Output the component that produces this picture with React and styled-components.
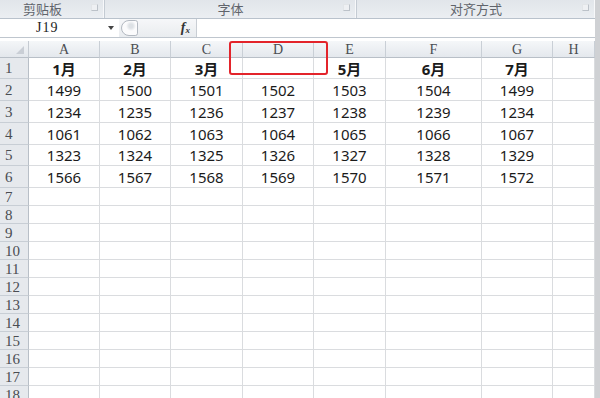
import styled, { createGlobalStyle } from "styled-components";

const GlobalStyle = createGlobalStyle`
  html, body {
    margin: 0;
    padding: 0;
    background: #ffffff;
    overflow: hidden;
  }
`;

const columns = [
  { letter: "A", width: 71 },
  { letter: "B", width: 71 },
  { letter: "C", width: 72 },
  { letter: "D", width: 71 },
  { letter: "E", width: 72 },
  { letter: "F", width: 96 },
  { letter: "G", width: 71 },
  { letter: "H", width: 42 },
];

const months = ["1月", "2月", "3月", "", "5月", "6月", "7月", ""];

const values = [
  [1499, 1500, 1501, 1502, 1503, 1504, 1499],
  [1234, 1235, 1236, 1237, 1238, 1239, 1234],
  [1061, 1062, 1063, 1064, 1065, 1066, 1067],
  [1323, 1324, 1325, 1326, 1327, 1328, 1329],
  [1566, 1567, 1568, 1569, 1570, 1571, 1572],
];

const dataHeights = [21, 22, 22, 22, 21, 22];

const groups = [
  { label: "剪贴板", width: 105, align: "left" },
  { label: "字体", width: 252, align: "center" },
  { label: "对齐方式", width: 239, align: "center" },
];

const App = () => {
  const template = `29px ${columns.map((c) => c.width + "px").join(" ")}`;
  const emptyRows = Array.from({ length: 12 }, (_, i) => i + 7);

  return (
    <>
      <GlobalStyle />
      <Window>
        <Ribbon>
          {groups.map((g) => (
            <Group key={g.label} $width={g.width}>
              <GroupLabel $align={g.align}>{g.label}</GroupLabel>
              <Launcher />
            </Group>
          ))}
        </Ribbon>

        <FormulaBar>
          <NameBox>
            <span>J19</span>
            <Arrow />
          </NameBox>
          <Splitter>
            <Grip />
            <Fx>
              f<sub>x</sub>
            </Fx>
          </Splitter>
          <FormulaInput />
        </FormulaBar>

        <Sheet style={{ gridTemplateColumns: template }}>
          <Corner>
            <CornerMark />
          </Corner>
          {columns.map((c) => (
            <ColHeader key={c.letter}>{c.letter}</ColHeader>
          ))}

          <RowHeader $h={dataHeights[0]}>1</RowHeader>
          {months.map((m, i) => (
            <Cell key={"m" + i} $h={dataHeights[0]} $bold>
              {m}
            </Cell>
          ))}

          {values.map((row, r) => (
            <Row key={r}>
              <RowHeader $h={dataHeights[r + 1]}>{r + 2}</RowHeader>
              {row.map((v, i) => (
                <Cell key={i} $h={dataHeights[r + 1]}>
                  {v}
                </Cell>
              ))}
              <Cell $h={dataHeights[r + 1]} />
            </Row>
          ))}

          {emptyRows.map((n) => (
            <Row key={n}>
              <RowHeader $h={18}>{n}</RowHeader>
              {columns.map((c) => (
                <Cell key={c.letter} $h={18} />
              ))}
            </Row>
          ))}

          <Highlight />
        </Sheet>
        <ScrollEdge />
      </Window>
    </>
  );
};

export default App;

// Styled Components
const Window = styled.div`
  position: relative;
  width: 600px;
  height: 398px;
  overflow: hidden;
  background: #ffffff;
  font-family: "Noto Sans", "Noto Sans CJK SC", sans-serif;
`;

const Ribbon = styled.div`
  display: flex;
  height: 18px;
  background: linear-gradient(#e1e5ea, #ebeef2);
  border-bottom: 1px solid #b9c2cc;
  width: 596px;
`;

const Group = styled.div`
  position: relative;
  width: ${(p) => p.$width}px;
  display: flex;
  align-items: center;
  border-right: 1px solid #c4cbd3;
  box-shadow: inset -1px 0 0 #f7f8fa;
  box-sizing: border-box;
`;

const GroupLabel = styled.div`
  flex: 1;
  text-align: ${(p) => p.$align};
  padding-left: ${(p) => (p.$align === "left" ? "23px" : "0")};
  font-family: "Noto Sans CJK SC", sans-serif;
  font-size: 13px;
  line-height: 16px;
  color: #60646b;
  margin-top: -1px;
`;

const Launcher = styled.div`
  position: absolute;
  right: 6px;
  top: 4px;
  width: 5px;
  height: 5px;
  border: 1px solid #bcc2c9;
  border-top-color: #e2e5e8;
  border-left-color: #e2e5e8;
  background: #eef0f3;
`;

const FormulaBar = styled.div`
  display: flex;
  height: 18px;
  width: 596px;
  border-bottom: 1px solid #bfc6ce;
  background: #ffffff;
  margin-bottom: 3px;
`;

const NameBox = styled.div`
  width: 119px;
  display: flex;
  align-items: center;
  box-sizing: border-box;
  padding-left: 36px;
  font-family: "Liberation Serif", serif;
  font-size: 14px;
  letter-spacing: 1px;
  color: #222;

  span {
    flex: 1;
  }
`;

const Arrow = styled.div`
  width: 0;
  height: 0;
  border-left: 3px solid transparent;
  border-right: 3px solid transparent;
  border-top: 4px solid #444;
  margin-right: 5px;
`;

const Splitter = styled.div`
  width: 78px;
  display: flex;
  align-items: center;
  justify-content: space-between;
  background: linear-gradient(#f6f7f9, #e9ecef);
  border-right: 1px solid #c9ced4;
  box-sizing: border-box;
  padding-right: 6px;
`;

const Grip = styled.div`
  width: 17px;
  height: 16px;
  margin-left: 2px;
  border-radius: 9px 3px 3px 9px;
  border: 1px solid #b3b9c1;
  background: radial-gradient(circle at 9px 5px, #dde1e5 2px, #fbfbfc 5px);
  box-sizing: border-box;
`;

const Fx = styled.div`
  font-family: "Liberation Serif", serif;
  font-style: italic;
  font-weight: bold;
  font-size: 14px;
  color: #333;
  line-height: 1;

  sub {
    font-size: 9px;
    vertical-align: -1px;
  }
`;

const FormulaInput = styled.div`
  flex: 1;
  background: #ffffff;
`;

const Sheet = styled.div`
  position: relative;
  display: grid;
  width: 595px;
`;

const Row = styled.div`
  display: contents;
`;

const Corner = styled.div`
  height: 17px;
  background: linear-gradient(#f4f6f8, #e3e7ec);
  border-right: 1px solid #c5cbd2;
  border-bottom: 1px solid #b8bfc7;
  box-sizing: border-box;
  position: relative;
`;

const CornerMark = styled.div`
  position: absolute;
  right: 4px;
  bottom: 3px;
  width: 0;
  height: 0;
  border-left: 8px solid transparent;
  border-bottom: 8px solid #c9ced5;
`;

const ColHeader = styled.div`
  height: 17px;
  background: linear-gradient(#f5f7f9, #e4e8ed);
  border-right: 1px solid #c9cfd6;
  border-bottom: 1px solid #b8bfc7;
  box-sizing: border-box;
  display: flex;
  align-items: center;
  justify-content: center;
  padding-top: 2px;
  font-family: "Liberation Serif", serif;
  font-size: 14px;
  color: #4a4d52;
`;

const RowHeader = styled.div`
  height: ${(p) => p.$h}px;
  background: #e6e9ed;
  border-right: 1px solid #b8bfc7;
  border-bottom: 1px solid #c8ced5;
  box-sizing: border-box;
  display: flex;
  align-items: center;
  padding-left: 5px;
  padding-top: 1px;
  font-family: "Liberation Serif", serif;
  font-size: 15px;
  color: #4a4d52;
`;

const Cell = styled.div`
  height: ${(p) => p.$h}px;
  border-right: 1px solid #dadcdf;
  border-bottom: 1px solid #dadcdf;
  box-sizing: border-box;
  display: flex;
  align-items: center;
  justify-content: center;
  font-size: 15px;
  font-weight: ${(p) => (p.$bold ? 700 : 400)};
  color: #1b1b1b;
  white-space: nowrap;
`;

const Highlight = styled.div`
  position: absolute;
  left: 229px;
  top: 0;
  width: 99px;
  height: 34px;
  border: 2px solid #e3242b;
  border-radius: 3px;
  box-sizing: border-box;
  pointer-events: none;
`;

const ScrollEdge = styled.div`
  position: absolute;
  top: 0;
  right: 0;
  width: 5px;
  height: 398px;
  background: #cfd1d4;
`;
